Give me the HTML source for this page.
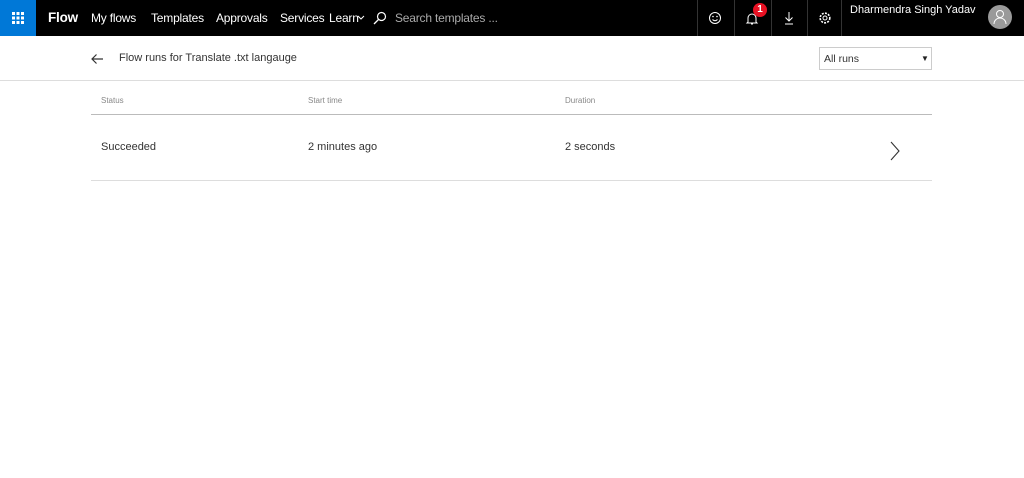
<!DOCTYPE html>
<html><head><meta charset="utf-8"><style>
*{margin:0;padding:0;box-sizing:border-box}
body{width:1024px;height:478px;background:#fff;font-family:"Liberation Sans",sans-serif;position:relative;overflow:hidden;color:#222}
.hdr{position:absolute;left:0;top:0;width:1024px;height:36px;background:#000;color:#fff}
.waffle{position:absolute;left:0;top:0;width:36px;height:36px;background:#0078d7}
.t{position:absolute;top:11px;font-size:12px;color:#fff;white-space:nowrap;letter-spacing:-0.2px}
.sep{position:absolute;top:0;width:1px;height:36px;background:#333}
.abs{position:absolute}
.s{font-size:11px;white-space:nowrap;position:absolute}
</style></head><body>
<div class="hdr">
 <div class="waffle"><svg width="36" height="36">
  <g fill="#fff"><rect x="12" y="12" width="3" height="3"/><rect x="16.5" y="12" width="3" height="3"/><rect x="21" y="12" width="3" height="3"/>
  <rect x="12" y="16.5" width="3" height="3"/><rect x="16.5" y="16.5" width="3" height="3"/><rect x="21" y="16.5" width="3" height="3"/>
  <rect x="12" y="21" width="3" height="3"/><rect x="16.5" y="21" width="3" height="3"/><rect x="21" y="21" width="3" height="3"/></g></svg></div>
 <div class="t" style="left:48px;font-weight:bold;font-size:13.5px;top:10px">Flow</div>
 <div class="t" style="left:91px">My flows</div>
 <div class="t" style="left:151px">Templates</div>
 <div class="t" style="left:216px">Approvals</div>
 <div class="t" style="left:280px">Services</div>
 <div class="t" style="left:329px">Learn</div>
 <svg class="abs" style="left:357px;top:15px" width="8" height="6"><path d="M1 1l3 3 3-3" stroke="#fff" fill="none"/></svg>
 <svg class="abs" style="left:373px;top:11px" width="14" height="14"><circle cx="8.5" cy="5.5" r="4" stroke="#fff" fill="none" stroke-width="1.2"/><path d="M5.5 8.5L1 13" stroke="#fff" stroke-width="1.3"/></svg>
 <div class="t" style="left:395px;color:#aaa">Search templates ...</div>
 <div class="sep" style="left:697px"></div><div class="sep" style="left:734px"></div><div class="sep" style="left:771px"></div><div class="sep" style="left:807px"></div><div class="sep" style="left:841px"></div>
 <svg class="abs" style="left:708px;top:11px" width="14" height="14"><circle cx="7" cy="7" r="5.5" stroke="#fff" fill="none"/><circle cx="5" cy="5.5" r=".8" fill="#fff"/><circle cx="9" cy="5.5" r=".8" fill="#fff"/><path d="M4.5 8.5q2.5 2.5 5 0" stroke="#fff" fill="none"/></svg>
 <svg class="abs" style="left:745px;top:11px" width="14" height="15"><path d="M3 11V7a4 4 0 0 1 8 0v4l1 1H2z M6 13h2" stroke="#fff" fill="none"/></svg>
 <div class="abs" style="left:753px;top:3px;width:14px;height:14px;border-radius:7px;background:#e81123;color:#fff;font-size:10px;font-weight:bold;text-align:center;line-height:14px">1</div>
 <svg class="abs" style="left:783px;top:11px" width="12" height="14"><path d="M6 1v9M2.5 6.5L6 10l3.5-3.5M2 13h8" stroke="#fff" fill="none"/></svg>
 <svg class="abs" style="left:818px;top:11px" width="14" height="14"><circle cx="7" cy="7" r="2" stroke="#fff" fill="none"/><circle cx="7" cy="7" r="4.8" stroke="#fff" fill="none" stroke-dasharray="2 1.2" stroke-width="1.6"/></svg>
 <div class="t" style="left:850px;top:4px;font-size:11px;letter-spacing:0">Dharmendra Singh Yadav</div>
 <div class="abs" style="left:988px;top:5px;width:24px;height:24px;border-radius:12px;background:#9a9a9a"><svg width="24" height="24"><circle cx="12" cy="9" r="3.5" stroke="#fff" fill="none"/><path d="M6 19a6 6 0 0 1 12 0" stroke="#fff" fill="none"/></svg></div>
</div>
<svg class="abs" style="left:90px;top:53px" width="14" height="12"><path d="M13 6H2M6.5 1.5L2 6l4.5 4.5" stroke="#333" fill="none" stroke-width="1.2"/></svg>
<div class="s" style="left:119px;top:52px;color:#333">Flow runs for Translate .txt langauge</div>
<div class="abs" style="left:819px;top:47px;width:113px;height:23px;border:1px solid #ccc"></div>
<div class="s" style="left:824px;top:53px;font-size:10.5px;color:#333">All runs</div>
<div class="s" style="left:921px;top:54px;font-size:8px;color:#222">▼</div>
<div class="abs" style="left:0;top:80px;width:1024px;height:1px;background:#ddd"></div>
<div class="s" style="left:101px;top:96px;font-size:8px;color:#888">Status</div>
<div class="s" style="left:308px;top:96px;font-size:8px;color:#888">Start time</div>
<div class="s" style="left:565px;top:96px;font-size:8px;color:#888">Duration</div>
<div class="abs" style="left:91px;top:114px;width:841px;height:1px;background:#bbb"></div>
<div class="s" style="left:101px;top:141px;color:#333">Succeeded</div>
<div class="s" style="left:308px;top:141px;color:#333">2 minutes ago</div>
<div class="s" style="left:565px;top:141px;color:#333">2 seconds</div>
<svg class="abs" style="left:889px;top:141px" width="12" height="20"><path d="M2 1l8 9-8 9" stroke="#333" fill="none" stroke-width="1.1"/></svg>
<div class="abs" style="left:91px;top:180px;width:841px;height:1px;background:#ddd"></div>
</body></html>
